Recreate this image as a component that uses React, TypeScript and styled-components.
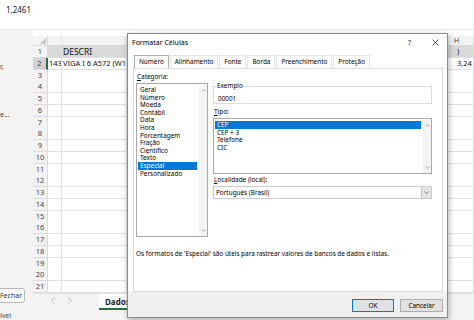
import styled, { createGlobalStyle } from "styled-components";

const GlobalStyle = createGlobalStyle`
  html, body {
    margin: 0;
    padding: 0;
  }
  body {
    width: 474px;
    height: 320px;
    overflow: hidden;
    background: #ffffff;
    font-family: "Noto Sans", "Open Sans", sans-serif;
    color: #000;
  }
`;

const categories = [
  "Geral",
  "Número",
  "Moeda",
  "Contábil",
  "Data",
  "Hora",
  "Porcentagem",
  "Fração",
  "Científico",
  "Texto",
  "Especial",
  "Personalizado",
];

const types = ["CEP", "CEP + 3", "Telefone", "CIC"];

const tabs = ["Número", "Alinhamento", "Fonte", "Borda", "Preenchimento", "Proteção"];

const rows = Array.from({ length: 21 }, (_, i) => i + 1);

function Chevron({ up, color = "#9a9a9a" }: { up?: boolean; color?: string }) {
  return (
    <svg width="5" height="3" viewBox="0 0 5 3">
      <path
        d={up ? "M0.5 2.5 L2.5 0.5 L4.5 2.5" : "M0.5 0.5 L2.5 2.5 L4.5 0.5"}
        fill="none"
        stroke={color}
        strokeWidth="0.8"
      />
    </svg>
  );
}

function SideArrow({ right }: { right?: boolean }) {
  return (
    <svg width="4" height="7" viewBox="0 0 4 7">
      <path
        d={right ? "M0.5 0.5 L3.5 3.5 L0.5 6.5" : "M3.5 0.5 L0.5 3.5 L3.5 6.5"}
        fill="none"
        stroke="#a8a8a8"
        strokeWidth="0.8"
      />
    </svg>
  );
}

function ScrollBar() {
  return (
    <Scroll>
      <Chevron up />
      <Chevron />
    </Scroll>
  );
}

export default function App() {
  return (
    <>
      <GlobalStyle />
      <Screen>
        <FormulaBar>1,2461</FormulaBar>

        <SidePanel>
          <Fragment $top={33}>r,</Fragment>
          <Fragment $top={81}>e...</Fragment>
          <CloseButton>Fechar</CloseButton>
        </SidePanel>

        <Sheet>
          <Row $head>
            <Corner>
              <svg width="6" height="6" viewBox="0 0 6 6">
                <path d="M6 0 L6 6 L0 6 Z" fill="#c8c8c8" />
              </svg>
            </Corner>
            <HeadCell />
            <HeadCell />
            <HeadCell />
            <HeadCell $left>H</HeadCell>
          </Row>
          {rows.map((n) => (
            <Row key={n}>
              <RowNumber $active={n === 2}>{n}</RowNumber>
              <Cell $fill={n === 1} $right>
                {n === 2 ? "143" : ""}
              </Cell>
              <Cell $fill={n === 1} $big={n === 1}>
                {n === 1 ? "DESCRI" : n === 2 ? "VIGA I 6 A572 (W1" : ""}
              </Cell>
              <Cell $fill={n === 1} />
              <Cell $fill={n === 1} $indent>
                {n === 1 ? ")" : n === 2 ? "3,24" : ""}
              </Cell>
            </Row>
          ))}
          <SheetTabs>
            <Arrows>
              <SideArrow />
              <SideArrow right />
            </Arrows>
            <SheetTab>Dados</SheetTab>
          </SheetTabs>
        </Sheet>

        <StatusBar>ível</StatusBar>

        <Dialog>
          <TitleBar>
            <span>Formatar Células</span>
            <TitleControls>
              <span>?</span>
              <svg width="7" height="7" viewBox="0 0 7 7">
                <path d="M0.5 0.5 L6.5 6.5 M6.5 0.5 L0.5 6.5" stroke="#333" strokeWidth="0.8" />
              </svg>
            </TitleControls>
          </TitleBar>

          <TabStrip>
            {tabs.map((t) => (
              <Tab key={t} $active={t === "Número"}>
                {t}
              </Tab>
            ))}
          </TabStrip>

          <TabPanel>
            <Columns>
              <LeftColumn>
                <Label>
                  <u>C</u>ategoria:
                </Label>
                <ListBox $height={154}>
                  <ListItems>
                    {categories.map((c) => (
                      <ListItem key={c} $selected={c === "Especial"}>
                        {c}
                      </ListItem>
                    ))}
                  </ListItems>
                  <ScrollBar />
                </ListBox>
              </LeftColumn>

              <RightColumn>
                <Sample>
                  <legend>Exemplo</legend>
                  00001
                </Sample>
                <Label $gap={3}>
                  <u>T</u>ipo:
                </Label>
                <ListBox $height={56}>
                  <ListItems>
                    {types.map((t) => (
                      <ListItem key={t} $selected={t === "CEP"}>
                        {t}
                      </ListItem>
                    ))}
                  </ListItems>
                  <ScrollBar />
                </ListBox>
                <Label $gap={1}>
                  <u>L</u>ocalidade (local):
                </Label>
                <Combo>
                  <span>Português (Brasil)</span>
                  <ComboButton>
                    <Chevron color="#666" />
                  </ComboButton>
                </Combo>
              </RightColumn>
            </Columns>

            <Description>
              Os formatos de 'Especial' são úteis para rastrear valores de bancos de dados e listas.
            </Description>
          </TabPanel>

          <ButtonBar>
            <DialogButton $primary>OK</DialogButton>
            <DialogButton>Cancelar</DialogButton>
          </ButtonBar>
        </Dialog>
      </Screen>
    </>
  );
}

const Screen = styled.div`
  position: relative;
  width: 474px;
  height: 320px;
  overflow: hidden;
  display: grid;
  grid-template-rows: 30px 1fr 10px;
  grid-template-columns: 33px 1fr;
  background: #f3f3f3;
`;

const FormulaBar = styled.div`
  grid-column: 1 / -1;
  background: #ffffff;
  border-bottom: 1px solid #e6e6e6;
  padding: 5px 0 0 6px;
  font-size: 8px;
  line-height: 10px;
  color: #222;
`;

const SidePanel = styled.div`
  position: relative;
  display: flex;
  flex-direction: column;
  justify-content: flex-end;
  padding-bottom: 7px;
  background: #f3f3f3;
  font-size: 7px;
  color: #444;
`;

const Fragment = styled.div<{ $top: number }>`
  position: absolute;
  left: 0;
  top: ${(p) => p.$top}px;
  line-height: 8px;
`;

const CloseButton = styled.div`
  margin-left: -3px;
  width: 28px;
  height: 15px;
  box-sizing: border-box;
  border: 1px solid #b9b9b9;
  border-radius: 3px;
  background: #ffffff;
  font-size: 7px;
  line-height: 13px;
  text-align: center;
  color: #333;
`;

const Sheet = styled.div`
  display: flex;
  flex-direction: column;
  padding-top: 6px;
  background: #ffffff;
  font-size: 7.5px;
  color: #222;
  overflow: hidden;
`;

const Row = styled.div<{ $head?: boolean }>`
  display: grid;
  grid-template-columns: 15px 14px 65px 1fr 26px;
  height: ${(p) => (p.$head ? "10px" : "11.75px")};
  flex: none;
  background: ${(p) => (p.$head ? "#f3f3f3" : "#ffffff")};
`;

const Corner = styled.div`
  display: flex;
  align-items: flex-end;
  justify-content: flex-end;
  padding: 0 1px 1px 0;
  border-right: 1px solid #dadada;
  border-bottom: 1px solid #dadada;
  background: #f3f3f3;
`;

const HeadCell = styled.div<{ $left?: boolean }>`
  border-right: 1px solid #e1e1e1;
  border-bottom: 1px solid #dadada;
  padding-left: ${(p) => (p.$left ? "6px" : "0")};
  font-size: 7px;
  line-height: 9px;
  color: #444;
`;

const RowNumber = styled.div<{ $active?: boolean }>`
  box-sizing: border-box;
  text-align: center;
  line-height: 11px;
  color: #444;
  background: ${(p) => (p.$active ? "#d2d2d2" : "#f3f3f3")};
  border-bottom: 1px solid #dcdcdc;
  border-right: ${(p) => (p.$active ? "2px solid #217346" : "1px solid #dadada")};
`;

const Cell = styled.div<{ $fill?: boolean; $right?: boolean; $big?: boolean; $indent?: boolean }>`
  box-sizing: border-box;
  background: ${(p) => (p.$fill ? "#d9d9d9" : "#ffffff")};
  border-right: 1px solid #e1e1e1;
  border-bottom: 1px solid #e1e1e1;
  font-size: ${(p) => (p.$big ? "8.5px" : "7.5px")};
  line-height: 11px;
  padding: ${(p) => (p.$indent ? "0 0 0 9px" : "0 1px")};
  white-space: nowrap;
  overflow: hidden;
  text-align: ${(p) => (p.$right ? "right" : "left")};
  color: #111;
`;

const SheetTabs = styled.div`
  flex: 1;
  display: flex;
  align-items: stretch;
  background: #f3f3f3;
  border-top: 1px solid #e1e1e1;
`;

const Arrows = styled.div`
  display: flex;
  gap: 13px;
  align-items: center;
  padding: 0 0 2px 18px;
  width: 66px;
  box-sizing: border-box;
`;

const SheetTab = styled.div`
  padding: 2px 6px 0 6px;
  background: #ffffff;
  font-size: 8px;
  font-weight: 700;
  color: #222;
  border-bottom: 2px solid #217346;
  height: 12px;
`;

const StatusBar = styled.div`
  grid-column: 1 / -1;
  background: #f3f3f3;
  font-size: 7px;
  line-height: 12px;
  color: #444;
  overflow: hidden;
`;

const Dialog = styled.div`
  position: absolute;
  left: 127px;
  top: 33px;
  width: 321px;
  height: 285px;
  box-sizing: border-box;
  display: flex;
  flex-direction: column;
  background: #ffffff;
  border: 1px solid #8c8c8c;
  box-shadow: 1px 2px 6px rgba(0, 0, 0, 0.3);
  font-size: 6.4px;
  color: #000;
`;

const TitleBar = styled.div`
  height: 17px;
  flex: none;
  display: flex;
  align-items: center;
  justify-content: space-between;
  padding: 0 8px 0 4px;
  font-size: 7px;
`;

const TitleControls = styled.div`
  display: flex;
  align-items: center;
  gap: 21px;
  color: #333;
`;

const TabStrip = styled.div`
  display: flex;
  margin: 4px 0 0 6px;
  height: 13px;
  flex: none;
`;

const Tab = styled.div<{ $active?: boolean }>`
  box-sizing: border-box;
  padding: 0 4px;
  line-height: 12px;
  margin-right: 1px;
  border: 1px solid ${(p) => (p.$active ? "#adadad" : "#e5e5e5")};
  border-bottom: none;
  background: #ffffff;
`;

const TabPanel = styled.div`
  flex: none;
  height: 224px;
  box-sizing: border-box;
  margin: 0 4px 0 5px;
  border: 1px solid #d9d9d9;
  padding: 3px 10px 0 2px;
`;

const Columns = styled.div`
  display: flex;
  gap: 5px;
`;

const LeftColumn = styled.div`
  width: 72px;
  display: flex;
  flex-direction: column;
`;

const RightColumn = styled.div`
  flex: 1;
  display: flex;
  flex-direction: column;
`;

const Label = styled.div<{ $gap?: number }>`
  margin-top: ${(p) => p.$gap ?? 0}px;
  padding-left: 1px;
  line-height: 10px;
  height: 10px;
  margin-bottom: 1px;
`;

const ListBox = styled.div<{ $height: number }>`
  box-sizing: border-box;
  height: ${(p) => p.$height}px;
  border: 1px solid #a9a9a9;
  display: flex;
  padding: 1px 0 0 1px;
`;

const ListItems = styled.div`
  flex: 1;
  padding-top: 1px;
  margin-right: 2px;
`;

const ListItem = styled.div<{ $selected?: boolean }>`
  height: 7.6px;
  line-height: 7.6px;
  padding-left: 2px;
  white-space: nowrap;
  background: ${(p) => (p.$selected ? "#0078d7" : "transparent")};
  color: ${(p) => (p.$selected ? "#ffffff" : "#000")};
`;

const Scroll = styled.div`
  width: 8px;
  display: flex;
  flex-direction: column;
  justify-content: space-between;
  align-items: center;
  padding: 4px 0 4px;
  background: #f4f4f4;
`;

const Sample = styled.fieldset`
  margin: 11px 0 0;
  padding: 5px 0 0 4px;
  height: 21px;
  box-sizing: border-box;
  border: 1px solid #dcdcdc;
  line-height: 9px;

  legend {
    padding: 0 1px;
    margin-left: -2px;
    line-height: 6px;
  }
`;

const Combo = styled.div`
  box-sizing: border-box;
  height: 13px;
  display: flex;
  align-items: center;
  justify-content: space-between;
  border: 1px solid #cccccc;
  padding-left: 2px;
`;

const ComboButton = styled.div`
  box-sizing: border-box;
  width: 10px;
  height: 11px;
  display: flex;
  align-items: center;
  justify-content: center;
  background: #e3e3e3;
  border-left: 1px solid #c4c4c4;
`;

const Description = styled.div`
  margin-top: 12px;
  line-height: 10px;
  white-space: nowrap;
`;

const ButtonBar = styled.div`
  flex: 1;
  display: flex;
  justify-content: flex-end;
  gap: 6px;
  padding: 7px 4px 0 0;
  background: #f0f0f0;
`;

const DialogButton = styled.div<{ $primary?: boolean }>`
  box-sizing: border-box;
  width: ${(p) => (p.$primary ? "42px" : "43px")};
  height: 13px;
  line-height: 11px;
  text-align: center;
  background: #e1e1e1;
  border: 1px solid ${(p) => (p.$primary ? "#0078d7" : "#adadad")};
`;
